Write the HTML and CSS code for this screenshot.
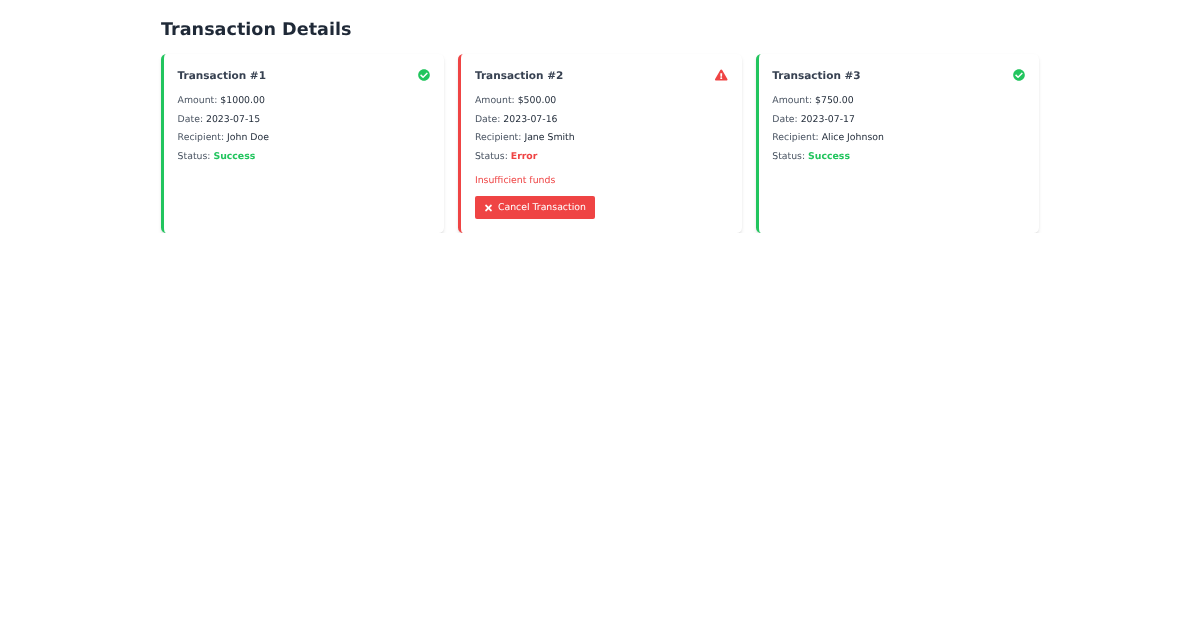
FILE: index.html
```html
<!DOCTYPE html>
<html lang="en">
<head>
<meta charset="utf-8">
<title>Transaction Details</title>
<link rel="stylesheet" href="styles.css">
</head>
<body>
<main class="page">
  <h1 class="title">Transaction Details</h1>
  <div class="cards">
    <section class="card card-success">
      <header class="card-head">
        <h2 class="card-title">Transaction #1</h2>
        <svg class="icon icon-success" viewBox="0 0 512 512"><path d="M504 256c0 136.967-111.033 248-248 248S8 392.967 8 256 119.033 8 256 8s248 111.033 248 248zM227.314 387.314l184-184c6.248-6.248 6.248-16.379 0-22.627l-22.627-22.627c-6.248-6.249-16.379-6.249-22.628 0L216 308.118l-70.059-70.059c-6.248-6.248-16.379-6.248-22.628 0l-22.627 22.627c-6.248 6.248-6.248 16.379 0 22.627l104 104c6.249 6.249 16.379 6.249 22.628.001z"/></svg>
      </header>
      <p class="row">Amount: <span class="value">$1000.00</span></p>
      <p class="row">Date: <span class="value">2023-07-15</span></p>
      <p class="row">Recipient: <span class="value">John Doe</span></p>
      <p class="row">Status: <span class="ok">Success</span></p>
    </section>
    <section class="card card-error">
      <header class="card-head">
        <h2 class="card-title">Transaction #2</h2>
        <svg class="icon icon-error" viewBox="0 0 576 512"><path d="M569.517 440.013C587.975 472.007 564.806 512 527.94 512H48.054c-36.937 0-59.999-40.055-41.577-71.987L246.423 23.985c18.467-32.009 64.72-31.951 83.154 0l239.94 416.028zM288 354c-25.405 0-46 20.595-46 46s20.595 46 46 46 46-20.595 46-46-20.595-46-46-46zm-43.673-165.346l7.418 136c.347 6.364 5.609 11.346 11.982 11.346h48.546c6.373 0 11.635-4.982 11.982-11.346l7.418-136c.375-6.874-5.098-12.654-11.982-12.654h-63.383c-6.884 0-12.356 5.78-11.981 12.654z"/></svg>
      </header>
      <p class="row">Amount: <span class="value">$500.00</span></p>
      <p class="row">Date: <span class="value">2023-07-16</span></p>
      <p class="row">Recipient: <span class="value">Jane Smith</span></p>
      <p class="row">Status: <span class="bad">Error</span></p>
      <p class="message">Insufficient funds</p>
      <button class="cancel" type="button">
        <svg class="icon-x" viewBox="0 0 352 512"><path d="M242.72 256l100.07-100.07c12.28-12.28 12.28-32.19 0-44.48l-22.24-22.24c-12.28-12.28-32.19-12.28-44.48 0L176 189.28 75.93 89.21c-12.28-12.28-32.19-12.28-44.48 0L9.21 111.45c-12.28 12.28-12.28 32.19 0 44.48L109.28 256 9.21 356.07c-12.28 12.28-12.28 32.19 0 44.48l22.24 22.24c12.28 12.28 32.2 12.28 44.48 0L176 322.72l100.07 100.07c12.28 12.28 32.2 12.28 44.48 0l22.24-22.24c12.28-12.28 12.28-32.19 0-44.48L242.72 256z"/></svg>
        <span class="cancel-label">Cancel Transaction</span>
      </button>
    </section>
    <section class="card card-success">
      <header class="card-head">
        <h2 class="card-title">Transaction #3</h2>
        <svg class="icon icon-success" viewBox="0 0 512 512"><path d="M504 256c0 136.967-111.033 248-248 248S8 392.967 8 256 119.033 8 256 8s248 111.033 248 248zM227.314 387.314l184-184c6.248-6.248 6.248-16.379 0-22.627l-22.627-22.627c-6.248-6.249-16.379-6.249-22.628 0L216 308.118l-70.059-70.059c-6.248-6.248-16.379-6.248-22.628 0l-22.627 22.627c-6.248 6.248-6.248 16.379 0 22.627l104 104c6.249 6.249 16.379 6.249 22.628.001z"/></svg>
      </header>
      <p class="row">Amount: <span class="value">$750.00</span></p>
      <p class="row">Date: <span class="value">2023-07-17</span></p>
      <p class="row">Recipient: <span class="value">Alice Johnson</span></p>
      <p class="row">Status: <span class="ok">Success</span></p>
    </section>
  </div>
</main>
</body>
</html>
```
FILE: styles.css
```css
* { box-sizing: border-box; }
html, body { margin: 0; background: #fff; }
body { font-family: "DejaVu Sans", sans-serif; color: #1f2937; text-rendering: geometricPrecision; }
.page { width: 878px; margin: 0 auto; padding-top: 20px; will-change: transform; }
.title { margin: 0 0 13px; font-size: 17.6px; line-height: 21px; font-weight: 700; color: #1f2937; }
.cards { display: grid; grid-template-columns: repeat(3, 1fr); gap: 14px; }
.card { background: #fff; border-left: 3px solid; border-radius: 5.33px; padding: 14.5px 14px 14.5px 13.6px; box-shadow: 0 2.67px 4px -1px rgba(0,0,0,.13), 0 1.33px 3px -1px rgba(0,0,0,.08), 0 0 2px rgba(0,0,0,.03); height: 179px; }
.card-success { border-color: #22c55e; }
.card-error { border-color: #ef4444; }
.card-head { display: flex; justify-content: space-between; align-items: flex-start; margin-bottom: 11.6px; height: 14px; }
.card-title { margin: 0; font-size: 10.5px; line-height: 14px; font-weight: 700; color: #374151; }
.icon { height: 12px; display: block; margin-top: .5px; }
.icon-success { width: 12px; fill: #22c55e; }
.icon-error { width: 12.5px; fill: #ef4444; }
.row { margin: 0 0 5.33px; font-size: 9.33px; line-height: 13.33px; color: #4b5563; }
.value { color: #1f2937; }
.ok { color: #22c55e; font-weight: 700; }
.bad { color: #ef4444; font-weight: 700; }
.message { margin: 10.4px 0 9px; font-size: 9.33px; line-height: 13.33px; color: #ef4444; }
.cancel { display: flex; align-items: center; gap: 6px; height: 23px; width: 120px; padding: .8px 0 0 10px; border: 0; border-radius: 2px; background: #ef4444; color: #fff; font: 9.33px/13.33px "DejaVu Sans", sans-serif; text-rendering: geometricPrecision; }
.cancel-label { white-space: nowrap; }
.icon-x { width: 7px; height: 10px; fill: #fff; flex: none; }
```
